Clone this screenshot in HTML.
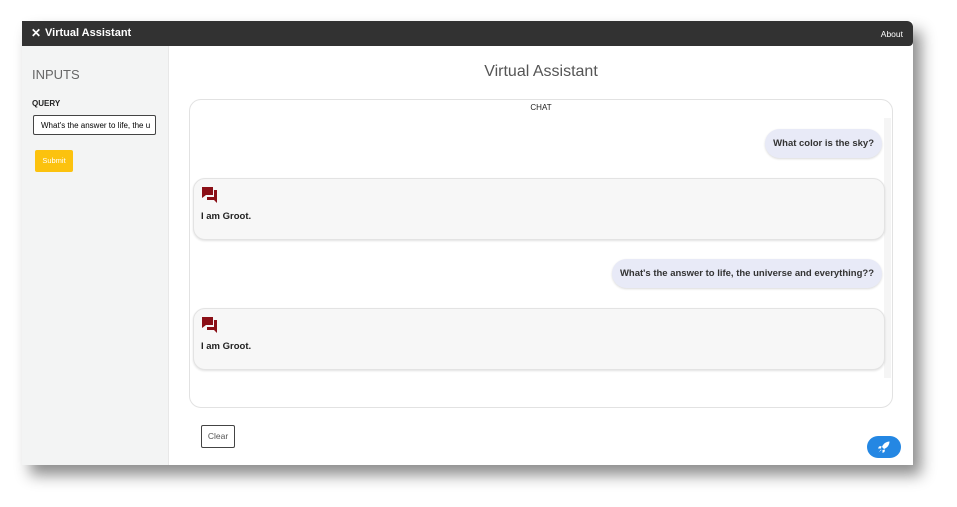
<!DOCTYPE html>
<html><head><style>
body{margin:0;width:957px;height:507px;background:#fff;position:relative;overflow:hidden;font-family:"Liberation Sans",sans-serif}
.win{position:absolute;left:22px;top:21px;width:891px;height:444px;background:#fff;box-shadow:8px 10px 14px rgba(0,0,0,.45)}
.hdr{position:absolute;left:0;top:0;width:891px;height:25px;background:#323232;color:#fff;border-radius:0 6px 4px 0}
.side{position:absolute;left:0;top:25px;width:146px;height:419px;background:#f3f4f4;border-right:1px solid #e8e8e8}
.chat{position:absolute;left:167px;top:78px;width:702px;height:307px;border:1px solid #e2e2e2;border-radius:12px}
.bub{position:absolute;background:#e8eaf7;border-radius:15px;font-size:9.5px;font-weight:bold;color:#333;padding:0 8px;height:29px;line-height:29px;box-shadow:0 1px 2px rgba(0,0,0,.15)}
.bot{position:absolute;left:3px;width:690px;height:60px;background:#f7f7f7;border:1px solid #e3e3e3;border-radius:12px;box-shadow:0 1px 2px rgba(0,0,0,.12)}
.bot b{position:absolute;left:7px;top:32px;font-size:9.5px;color:#222}
.bot svg{position:absolute;left:8px;top:8px}
</style></head><body>
<div class="win">
 <div class="hdr"><span style="position:absolute;left:9px;top:5px;font-size:12px;font-weight:bold">✕</span><span style="position:absolute;left:23px;top:6px;font-size:11px;font-weight:bold">Virtual Assistant</span><span style="position:absolute;right:10px;top:8px;font-size:8.5px">About</span></div>
 <div class="side">
  <div style="position:absolute;left:10px;top:21px;font-size:13px;color:#666">INPUTS</div>
  <div style="position:absolute;left:10px;top:53px;font-size:8px;color:#222;font-weight:bold">QUERY</div>
  <div style="position:absolute;left:11px;top:69px;height:20px;border:1px solid #444;border-radius:2px;background:#fff;font-size:8px;line-height:20px;padding-left:7px;overflow:hidden;white-space:nowrap;box-sizing:border-box;width:123px">What's the answer to life, the u</div>
  <div style="position:absolute;left:13px;top:104px;width:38px;height:22px;background:#fcc20e;border-radius:2px;color:#fff;font-size:7.5px;line-height:22px;text-align:center">Submit</div>
 </div>
 <div style="position:absolute;left:167px;top:42px;width:704px;text-align:center;font-size:16px;color:#555">Virtual Assistant</div>
 <div class="chat">
  <div style="position:absolute;left:0;width:702px;top:3px;text-align:center;font-size:8px;color:#222">CHAT</div>
  <div style="position:absolute;left:694px;top:18px;width:7px;height:260px;background:#f5f5f5"></div>
  <div class="bub" style="right:10px;top:29px">What color is the sky?</div>
  <div class="bot" style="top:78px"><svg width="16" height="16" viewBox="0 0 16 16"><path d="M0 0h11v8H4L0 11z" fill="#8b0f17"/><path d="M12 3h3v13l-3-3H5v-3h7z" fill="#8b0f17"/></svg><b>I am Groot.</b></div>
  <div class="bub" style="right:10px;top:159px">What's the answer to life, the universe and everything??</div>
  <div class="bot" style="top:208px"><svg width="16" height="16" viewBox="0 0 16 16"><path d="M0 0h11v8H4L0 11z" fill="#8b0f17"/><path d="M12 3h3v13l-3-3H5v-3h7z" fill="#8b0f17"/></svg><b>I am Groot.</b></div>
 </div>
 <div style="position:absolute;left:179px;top:404px;width:32px;height:21px;border:1px solid #444;border-radius:2px;font-size:8.5px;line-height:21px;text-align:center;color:#555">Clear</div>
 <div style="position:absolute;left:845px;top:415px;width:34px;height:22px;border-radius:11px;background:#2487e3"><svg style="position:absolute;left:11px;top:5px" width="12" height="12" viewBox="0 0 12 12"><path d="M11.5 0.5C8 0.5 5 3 4 6l2 2c3-1 5.5-4 5.5-7.5z" fill="#fff"/><path d="M3.5 5L1 5.5 0 7.5h3zM7 8.5l-0.5 2.5L4.5 12V9zM3 8.5L0.5 11.5 3.5 9z" fill="#fff"/></svg></div>
</div>
</body></html>
